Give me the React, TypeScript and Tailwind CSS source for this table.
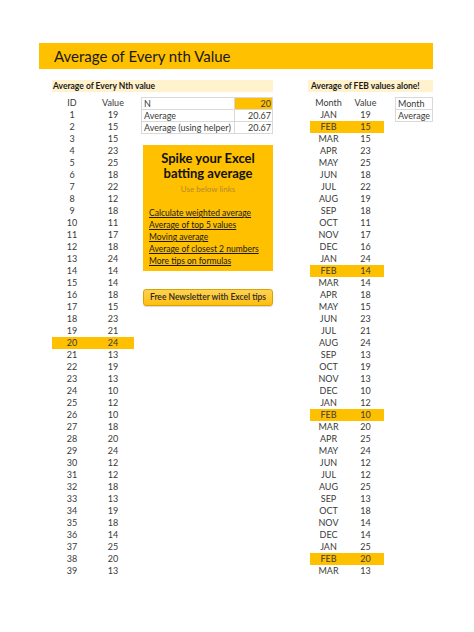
import React from "react";

const leftVals = [19,15,15,23,25,18,22,12,18,11,17,18,24,14,14,18,15,23,21,24,13,19,13,10,12,10,18,20,24,12,12,18,13,19,18,14,25,20,13];
const months = ["JAN","FEB","MAR","APR","MAY","JUN","JUL","AUG","SEP","OCT","NOV","DEC"];
const rightVals = [19,15,15,23,25,18,22,19,18,11,17,16,24,14,14,18,15,23,21,24,13,19,13,10,12,10,20,25,24,12,12,25,13,18,14,14,25,20,13];

export default function App() {
  return (
    <div className="w-[474px] h-[632px] bg-white text-[#3a3a3a]" style={{ fontFamily: "Lato, 'Open Sans', sans-serif" }}>
      <div className="pt-[43px] pl-[39px]">
        <div className="w-[394px] h-[26px] bg-[#FFC000] flex items-center pl-[15px]">
          <span className="text-[15px] text-[#1a1a1a] leading-none">Average of Every nth Value</span>
        </div>
      </div>
      <div className="flex pt-[11px]">
        {/* Left group */}
        <div className="ml-[52px] w-[221px]">
          <div className="h-[12px] bg-[#FFF2CC] text-[8.5px] font-bold leading-[12px] pl-[1px] text-[#1a1a1a]">Average of Every Nth value</div>
          <div className="flex mt-[5px]">
            <div className="w-[82px]">
              <div className="flex h-[12px] text-[9px] leading-[12px]">
                <div className="w-[40px] text-center">ID</div>
                <div className="w-[42px] text-center">Value</div>
              </div>
              {leftVals.map((v, i) => (
                <div key={i} className={"flex h-[12px] text-[9px] leading-[12px] " + (i === 19 ? "bg-[#FFC000]" : "")}>
                  <div className="w-[40px] text-center">{i + 1}</div>
                  <div className="w-[42px] text-center">{v}</div>
                </div>
              ))}
            </div>
            <div className="ml-[7px] w-[132px] flex flex-col">
              <div className="border-t border-l border-[#d9d9d9] text-[9px] leading-[11px]">
                <div className="flex border-b border-[#d9d9d9]">
                  <div className="flex-1 pl-[2px] border-r border-[#d9d9d9]">N</div>
                  <div className="w-[38px] text-right pr-[1px] bg-[#FFC000] border-r border-[#d9d9d9]">20</div>
                </div>
                <div className="flex border-b border-[#d9d9d9]">
                  <div className="flex-1 pl-[2px] border-r border-[#d9d9d9]">Average</div>
                  <div className="w-[38px] text-right pr-[1px] border-r border-[#d9d9d9]">20.67</div>
                </div>
                <div className="flex border-b border-[#d9d9d9]">
                  <div className="flex-1 pl-[2px] border-r border-[#d9d9d9]">Average (using helper)</div>
                  <div className="w-[38px] text-right pr-[1px] border-r border-[#d9d9d9]">20.67</div>
                </div>
              </div>
              <div className="ml-[2px] mt-[11px] w-[130px] h-[126px] bg-[#FFC000] flex flex-col">
                <div className="pt-[6px] flex flex-col items-center text-[13px] font-bold leading-[15px] text-[#111]">
                  <span>Spike your Excel</span>
                  <span>batting average</span>
                </div>
                <div className="text-center text-[8px] text-[#b8892a] mt-[3px] leading-[10px]">Use below links</div>
                <div className="mt-[13px] pl-[6px] flex flex-col text-[8.5px] leading-[12px] text-[#1a1a1a]">
                  <span className="underline">Calculate weighted average</span>
                  <span className="underline">Average of top 5 values</span>
                  <span className="underline">Moving average</span>
                  <span className="underline">Average of closest 2 numbers</span>
                  <span className="underline">More tips on formulas</span>
                </div>
              </div>
              <div className="ml-[2px] mt-[18px] w-[130px] h-[17px] rounded-[3px] border border-[#d9a400] bg-gradient-to-b from-[#ffd24d] to-[#ffbf00] flex items-center justify-center text-[8.5px] font-semibold text-[#2a2a2a] shadow-[0_1px_1px_rgba(0,0,0,0.15)]">
                Free Newsletter with Excel tips
              </div>
            </div>
          </div>
        </div>
        {/* Right group */}
        <div className="ml-[35px] w-[125px]">
          <div className="h-[12px] bg-[#FFF2CC] text-[8.5px] font-bold leading-[12px] pl-[3px] text-[#1a1a1a]">Average of FEB values alone!</div>
          <div className="flex mt-[5px]">
            <div className="ml-[2px] w-[74px]">
              <div className="flex h-[12px] text-[9px] leading-[12px]">
                <div className="w-[37px] text-center">Month</div>
                <div className="w-[37px] text-center">Value</div>
              </div>
              {rightVals.map((v, i) => (
                <div key={i} className={"flex h-[12px] text-[9px] leading-[12px] " + (i % 12 === 1 ? "bg-[#FFC000]" : "")}>
                  <div className="w-[37px] text-center">{months[i % 12]}</div>
                  <div className="w-[37px] text-center">{v}</div>
                </div>
              ))}
            </div>
            <div className="ml-[11px] w-[38px] h-[25px] border border-[#d9d9d9] text-[9px] leading-[11px]">
              <div className="pl-[2px] border-b border-[#d9d9d9]">Month</div>
              <div className="pl-[2px]">Average</div>
            </div>
          </div>
        </div>
      </div>
    </div>
  );
}
